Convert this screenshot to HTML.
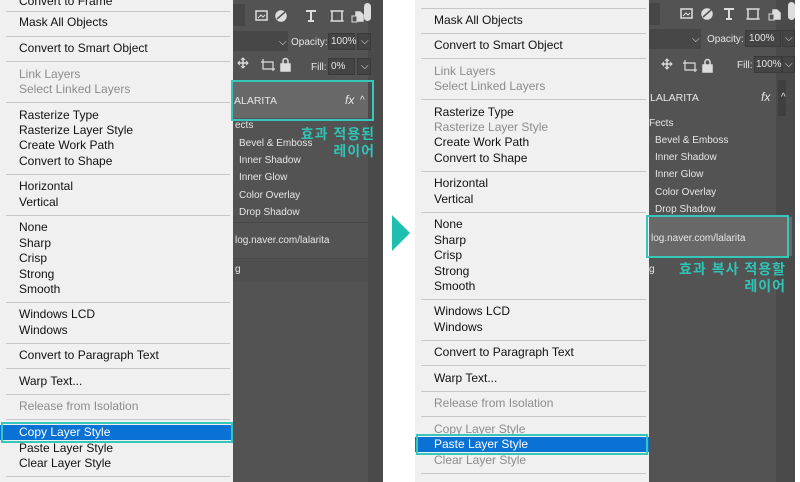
<!DOCTYPE html>
<html><head><meta charset="utf-8"><style>
*{margin:0;padding:0;box-sizing:border-box}
body{width:800px;height:482px;background:#fff;position:relative;overflow:hidden;font-family:"Liberation Sans",sans-serif}
.menu{position:absolute;top:0;height:482px;background:#f0f0f0}
.menu div{position:absolute;white-space:nowrap}
.it{left:19px;font-size:12px;color:#111;height:15px;line-height:15px}
.dis{color:#8c8c8c}
.sep{left:6px;right:3px;height:1px;background:#c8c8c8}
.hl{left:0;right:0;height:15px;background:#0a72d4}
.ps{position:absolute;top:0;height:482px;background:#535353;overflow:hidden}
.ps div,.ps svg{position:absolute;white-space:nowrap}
.t{color:#e6e6e6;font-size:10px}
.ic{color:#ddd;font-size:13px}
.box{background:#444;border:1px solid #3a3a3a}
.teal{border:2px solid #35c8ba}
.kr{position:absolute;color:#2fc4b6;font-weight:bold;font-size:14px;font-family:"Liberation Sans","Noto Sans CJK KR",sans-serif;text-align:right;line-height:17px;letter-spacing:1px}
</style></head><body>

<!-- LEFT MENU -->
<div class="menu" style="left:0;width:233px">
<div class="it" style="top:-6px">Convert to Frame</div>
<div class="sep" style="top:11px"></div>
<div class="it" style="top:15px">Mask All Objects</div>
<div class="sep" style="top:36px"></div>
<div class="it" style="top:41px">Convert to Smart Object</div>
<div class="sep" style="top:61px"></div>
<div class="it dis" style="top:67px">Link Layers</div>
<div class="it dis" style="top:82px">Select Linked Layers</div>
<div class="sep" style="top:102px"></div>
<div class="it" style="top:108px">Rasterize Type</div>
<div class="it" style="top:123px">Rasterize Layer Style</div>
<div class="it" style="top:138px">Create Work Path</div>
<div class="it" style="top:154px">Convert to Shape</div>
<div class="sep" style="top:174px"></div>
<div class="it" style="top:179px">Horizontal</div>
<div class="it" style="top:195px">Vertical</div>
<div class="sep" style="top:215px"></div>
<div class="it" style="top:220px">None</div>
<div class="it" style="top:236px">Sharp</div>
<div class="it" style="top:251px">Crisp</div>
<div class="it" style="top:267px">Strong</div>
<div class="it" style="top:282px">Smooth</div>
<div class="sep" style="top:302px"></div>
<div class="it" style="top:307px">Windows LCD</div>
<div class="it" style="top:323px">Windows</div>
<div class="sep" style="top:343px"></div>
<div class="it" style="top:348px">Convert to Paragraph Text</div>
<div class="sep" style="top:368px"></div>
<div class="it" style="top:374px">Warp Text...</div>
<div class="sep" style="top:394px"></div>
<div class="it dis" style="top:399px">Release from Isolation</div>
<div class="sep" style="top:419px"></div>
<div class="hl" style="top:425px"></div>
<div class="it" style="top:425px;color:#fff">Copy Layer Style</div>
<div class="it" style="top:441px">Paste Layer Style</div>
<div class="it" style="top:456px">Clear Layer Style</div>
<div class="sep" style="top:476px"></div>
<div class="teal" style="left:1px;top:422px;width:232px;height:21px"></div>
</div>

<!-- LEFT PANEL -->
<div class="ps" style="left:233px;width:150px">
<div style="left:135px;top:0;width:15px;height:482px;background:#4a4a4a"></div>
<div style="left:0;top:4px;width:12px;height:22px;background:#474747"></div>
<svg style="left:0;top:0" width="135" height="80" fill="none" stroke="#ddd" stroke-width="1.5">
<rect x="23" y="11" width="11" height="9"/><path d="M25 18l3-3 2 2 2-2" stroke-width="1"/>
<circle cx="48" cy="16" r="5" fill="#ddd"/><path d="M44 19l8-7" stroke="#535353"/>
<path d="M73 11h10M78 11v10M75 21h6" stroke-width="2"/>
<rect x="99" y="11" width="10" height="10"/><path d="M97 11h4M107 11h4M97 21h4M107 21h4" stroke-width="1"/>
<path d="M123 12h4l3 3v6h-7z" fill="#ddd"/><rect x="119" y="16" width="5" height="6" fill="#535353" stroke="#ddd" stroke-width="1"/>
<path d="M5 63h10M10 58v10" /><path d="M8 60l2-2 2 2M8 66l2 2 2-2M7 61l-2 2 2 2M13 61l2 2-2 2" stroke-width="1"/>
<path d="M30 59v10h12M28 62h12v9" stroke-width="1.2"/>
<rect x="48" y="64" width="9" height="7" fill="#ddd"/><path d="M50 64v-3a2.5 2.5 0 0 1 5 0v3"/>
</svg>
<div style="left:131px;top:3px;width:7px;height:18px;border-radius:4px;background:#ddd"></div>
<div style="left:0;top:31px;width:55px;height:20px;background:#474747"></div>
<div class="t" style="left:46px;top:37px">⌵</div>
<div class="t" style="left:58px;top:37px">Opacity:</div>
<div class="t box" style="left:95px;top:33px;width:27px;height:17px;padding:2px 2px">100%</div>
<div class="t box" style="left:124px;top:33px;width:14px;height:17px;padding:2px 3px">⌵</div>
<div class="t" style="left:78px;top:62px">Fill:</div>
<div class="t box" style="left:95px;top:58px;width:27px;height:17px;padding:2px 2px">0%</div>
<div class="t box" style="left:124px;top:58px;width:14px;height:17px;padding:2px 3px">⌵</div>
<div style="left:0;top:81px;width:135px;height:37px;background:#686868"></div>
<div class="t" style="left:1px;top:95px;font-size:10.5px">ALARITA</div>
<div class="t" style="left:112px;top:93px;font-style:italic;font-size:12px">fx</div>
<div class="t" style="left:127px;top:95px">^</div>
<div class="t" style="left:2px;top:120px">ects</div>
<div class="t" style="left:6px;top:138px">Bevel &amp; Emboss</div>
<div class="t" style="left:6px;top:155px">Inner Shadow</div>
<div class="t" style="left:6px;top:172px">Inner Glow</div>
<div class="t" style="left:6px;top:190px">Color Overlay</div>
<div class="t" style="left:6px;top:207px">Drop Shadow</div>
<div style="left:0;top:222px;width:135px;height:1px;background:#474747"></div>
<div class="t" style="left:2px;top:235px">log.naver.com/lalarita</div>
<div style="left:0;top:258px;width:135px;height:24px;background:#4f4f4f;border-top:1px solid #474747"></div>
<div class="t" style="left:2px;top:264px">g</div>
</div>
<div class="teal" style="left:231px;top:80px;width:143px;height:41px;position:absolute"></div>
<div class="kr" style="left:270px;top:126px;width:105px">효과 적용된<br>레이어</div>

<!-- ARROW -->
<svg style="position:absolute;left:392px;top:215px" width="18" height="36"><polygon points="0,0 18,18 0,36" fill="#1fbfb0"/></svg>

<!-- RIGHT MENU -->
<div class="menu" style="left:415px;width:234px">
<div class="sep" style="top:8px"></div>
<div class="it" style="top:13px">Mask All Objects</div>
<div class="sep" style="top:33px"></div>
<div class="it" style="top:38px">Convert to Smart Object</div>
<div class="sep" style="top:58px"></div>
<div class="it dis" style="top:64px">Link Layers</div>
<div class="it dis" style="top:79px">Select Linked Layers</div>
<div class="sep" style="top:99px"></div>
<div class="it" style="top:105px">Rasterize Type</div>
<div class="it dis" style="top:120px">Rasterize Layer Style</div>
<div class="it" style="top:135px">Create Work Path</div>
<div class="it" style="top:151px">Convert to Shape</div>
<div class="sep" style="top:171px"></div>
<div class="it" style="top:176px">Horizontal</div>
<div class="it" style="top:192px">Vertical</div>
<div class="sep" style="top:212px"></div>
<div class="it" style="top:217px">None</div>
<div class="it" style="top:233px">Sharp</div>
<div class="it" style="top:248px">Crisp</div>
<div class="it" style="top:264px">Strong</div>
<div class="it" style="top:279px">Smooth</div>
<div class="sep" style="top:299px"></div>
<div class="it" style="top:304px">Windows LCD</div>
<div class="it" style="top:320px">Windows</div>
<div class="sep" style="top:340px"></div>
<div class="it" style="top:345px">Convert to Paragraph Text</div>
<div class="sep" style="top:365px"></div>
<div class="it" style="top:371px">Warp Text...</div>
<div class="sep" style="top:391px"></div>
<div class="it dis" style="top:396px">Release from Isolation</div>
<div class="sep" style="top:416px"></div>
<div class="it dis" style="top:422px">Copy Layer Style</div>
<div class="hl" style="top:437px"></div>
<div class="it" style="top:437px;color:#fff">Paste Layer Style</div>
<div class="it dis" style="top:453px">Clear Layer Style</div>
<div class="sep" style="top:473px"></div>
<div class="teal" style="left:1px;top:434px;width:232px;height:21px"></div>
</div>

<!-- RIGHT PANEL -->
<div class="ps" style="left:649px;width:146px">
<div style="left:127px;top:0;width:19px;height:482px;background:#4a4a4a"></div>
<div style="left:129px;top:80px;width:8px;height:36px;background:#3f3f3f"></div>
<div style="left:0;top:3px;width:11px;height:22px;background:#474747"></div>
<svg style="left:0;top:0" width="146" height="80" fill="none" stroke="#ddd" stroke-width="1.5">
<rect x="32" y="9" width="11" height="9"/><path d="M34 16l3-3 2 2 2-2" stroke-width="1"/>
<circle cx="58" cy="14" r="5" fill="#ddd"/><path d="M54 17l8-7" stroke="#535353"/>
<path d="M75 9h10M80 9v10M77 19h6" stroke-width="2"/>
<rect x="99" y="9" width="10" height="10"/><path d="M97 9h4M107 9h4M97 19h4M107 19h4" stroke-width="1"/>
<path d="M124 10h4l3 3v6h-7z" fill="#ddd"/><rect x="120" y="14" width="5" height="6" fill="#535353" stroke="#ddd" stroke-width="1"/>
<path d="M13 64h10M18 59v10"/><path d="M16 61l2-2 2 2M16 67l2 2 2-2M15 62l-2 2 2 2M21 62l2 2-2 2" stroke-width="1"/>
<path d="M36 60v10h12M34 63h12v9" stroke-width="1.2"/>
<rect x="54" y="65" width="9" height="7" fill="#ddd"/><path d="M56 65v-3a2.5 2.5 0 0 1 5 0v3"/>
</svg>
<div style="left:139px;top:2px;width:7px;height:18px;border-radius:4px;background:#ddd"></div>
<div style="left:0;top:29px;width:52px;height:20px;background:#474747"></div>
<div class="t" style="left:43px;top:34px">⌵</div>
<div class="t" style="left:58px;top:34px">Opacity:</div>
<div class="t box" style="left:96px;top:30px;width:36px;height:17px;padding:2px 3px">100%</div>
<div class="t box" style="left:133px;top:30px;width:13px;height:17px;padding:2px 2px">⌵</div>
<div class="t" style="left:88px;top:60px">Fill:</div>
<div class="t box" style="left:105px;top:56px;width:28px;height:17px;padding:2px 1px">100%</div>
<div class="t box" style="left:133px;top:56px;width:13px;height:17px;padding:2px 2px">⌵</div>
<div class="t" style="left:1px;top:92px;font-size:10.5px">LALARITA</div>
<div class="t" style="left:112px;top:90px;font-style:italic;font-size:12px">fx</div>
<div class="t" style="left:132px;top:92px">^</div>
<div class="t" style="left:0;top:118px">Fects</div>
<div class="t" style="left:6px;top:135px">Bevel &amp; Emboss</div>
<div class="t" style="left:6px;top:152px">Inner Shadow</div>
<div class="t" style="left:6px;top:169px">Inner Glow</div>
<div class="t" style="left:6px;top:187px">Color Overlay</div>
<div class="t" style="left:6px;top:204px">Drop Shadow</div>
<div style="left:0;top:217px;width:143px;height:39px;background:#686868"></div>
<div class="t" style="left:2px;top:233px">log.naver.com/lalarita</div>
<div class="t" style="left:0;top:264px">g</div>
</div>
<div class="teal" style="left:646px;top:215px;width:143px;height:43px;position:absolute"></div>
<div class="kr" style="left:650px;top:261px;width:136px">효과 복사 적용할<br>레이어</div>
</body></html>
